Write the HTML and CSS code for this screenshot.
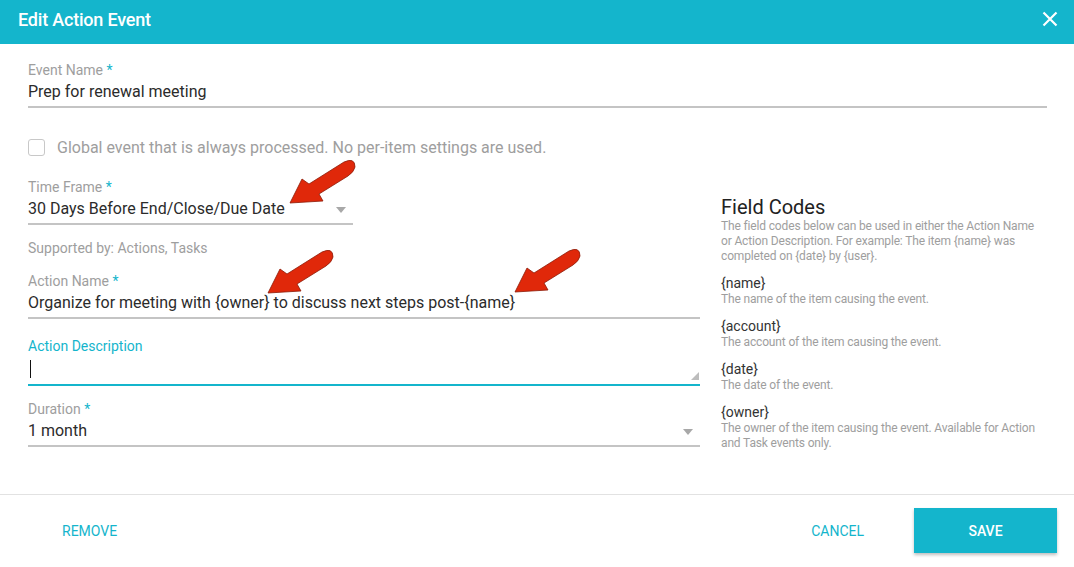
FILE: index.html
```html
<!DOCTYPE html>
<html lang="en">
<head>
    <meta charset="UTF-8">
    <title>Edit Action Event</title>
    <link rel="stylesheet" href="styles.css">
</head>
<body>
    <div class="dialog">
        <div class="title-bar">
            <span class="title">Edit Action Event</span>
            <svg class="close-icon" width="16" height="16" viewBox="0 0 16 16">
                <path d="M1.5 1.5 L14.5 14.5 M14.5 1.5 L1.5 14.5" stroke="#fff" stroke-width="2.2" fill="none"/>
            </svg>
        </div>

        <div class="content">
            <div class="field field-event">
                <div class="label">Event Name <span class="req">*</span></div>
                <div class="value">Prep for renewal meeting</div>
            </div>

            <div class="check-row">
                <span class="checkbox"></span>
                <span>Global event that is always processed. No per-item settings are used.</span>
            </div>

            <div class="columns">
                <div class="left">
                    <div class="field field-time">
                        <div class="label">Time Frame <span class="req">*</span></div>
                        <div class="value select">30 Days Before End/Close/Due Date<span class="caret"></span></div>
                    </div>
                    <div class="hint">Supported by: Actions, Tasks</div>
                    <div class="field field-name">
                        <div class="label">Action Name <span class="req">*</span></div>
                        <div class="value">Organize for meeting with {owner} to discuss next steps post-{name}</div>
                    </div>
                    <div class="field field-desc focused">
                        <div class="label">Action Description</div>
                        <div class="value textarea"><span class="cursor"></span><span class="grip"></span></div>
                    </div>
                    <div class="field field-duration">
                        <div class="label">Duration <span class="req">*</span></div>
                        <div class="value select">1 month<span class="caret"></span></div>
                    </div>
                </div>

                <div class="codes">
                    <h2>Field Codes</h2>
                    <p class="codes-intro">The field codes below can be used in either the Action Name or Action Description. For example: The item {name} was completed on {date} by {user}.</p>
                    <div class="code">
                        <div class="code-name">{name}</div>
                        <div class="code-desc">The name of the item causing the event.</div>
                    </div>
                    <div class="code">
                        <div class="code-name">{account}</div>
                        <div class="code-desc">The account of the item causing the event.</div>
                    </div>
                    <div class="code">
                        <div class="code-name">{date}</div>
                        <div class="code-desc">The date of the event.</div>
                    </div>
                    <div class="code">
                        <div class="code-name">{owner}</div>
                        <div class="code-desc">The owner of the item causing the event. Available for Action and Task events only.</div>
                    </div>
                </div>
            </div>
        </div>

        <div class="footer">
            <button class="btn-flat">REMOVE</button>
            <div class="footer-right">
                <button class="btn-flat">CANCEL</button>
                <button class="btn-save">SAVE</button>
            </div>
        </div>

        <!-- annotation arrows drawn over the form -->
        <svg class="arrows" width="1074" height="567" viewBox="0 0 1074 567">
            <defs>
                <path id="arrow" d="M0,0 L12,-24 L19,-19 L54,-41 Q65,-46 65,-36 Q64,-31 58,-27 L29,-9 L33,-2 Z"
                      fill="#e0280a" stroke="#8c1a08" stroke-width="0.8" stroke-linejoin="round"/>
            </defs>
            <use href="#arrow" x="290" y="203"/>
            <use href="#arrow" x="268" y="293"/>
            <use href="#arrow" x="515" y="292"/>
        </svg>
    </div>
</body>
</html>
```

FILE: styles.css
```css
body {
    margin: 0;
    font-family: Roboto, "Liberation Sans", Arial, sans-serif;
    background: #fff;
}

.dialog {
    position: relative;
    width: 1074px;
    height: 567px;
    overflow: hidden;
}

.title-bar {
    height: 44px;
    background-color: #14b5cc;
    color: #fff;
    display: flex;
    align-items: center;
    justify-content: space-between;
    padding: 0 16px 0 18px;
}

.title {
    font-size: 18px;
    font-weight: 500;
    letter-spacing: -0.2px;
    margin-top: -6px;
}

.close-icon {
    margin-top: -7px;
}

.content {
    padding: 18px 27px 0 28px;
}

.field .label {
    font-size: 14px;
    line-height: 17px;
    color: #9e9e9e;
}

.req {
    color: #14b5cc;
}

.field .value {
    position: relative;
    font-size: 16px;
    line-height: 20px;
    color: #2b2b2b;
    margin-top: 3px;
    padding-bottom: 4px;
    border-bottom: 2px solid #c4c4c4;
}

.field.focused .label {
    color: #14b5cc;
}

.field.focused .value {
    border-bottom-color: #14b5cc;
}

.check-row {
    display: flex;
    align-items: center;
    gap: 12px;
    margin-top: 29px;
    height: 20px;
    font-size: 16px;
    color: #9e9e9e;
}

.checkbox {
    width: 15px;
    height: 15px;
    border: 1.5px solid #c8c8c8;
    border-radius: 3px;
}

.columns {
    display: grid;
    grid-template-columns: 672px 1fr;
    gap: 21px;
    margin-top: 22px;
}

.field-time {
    width: 325px;
}

.select .caret {
    position: absolute;
    right: 7px;
    top: 8px;
    border-left: 5px solid transparent;
    border-right: 5px solid transparent;
    border-top: 6px solid #a8a8a8;
}

.hint {
    font-size: 14px;
    line-height: 17px;
    color: #9e9e9e;
    margin-top: 15px;
}

.field-name {
    margin-top: 16px;
}

.field-desc {
    margin-top: 19px;
}

.textarea {
    height: 24px;
    padding-bottom: 2px !important;
}

.cursor {
    position: absolute;
    left: 2px;
    top: 2px;
    width: 1px;
    height: 18px;
    background: #111;
}

.grip {
    position: absolute;
    right: 1px;
    bottom: 4px;
    width: 0;
    height: 0;
    border-left: 8px solid transparent;
    border-bottom: 8px solid #bdbdbd;
}

.field-duration {
    margin-top: 15px;
}

.codes {
    padding-top: 16px;
}

.codes h2 {
    margin: 0;
    font-size: 20px;
    font-weight: 400;
    line-height: 24px;
    color: #222;
}

.codes-intro {
    margin: 0;
    font-size: 12px;
    line-height: 15px;
    color: #9e9e9e;
    letter-spacing: -0.15px;
}

.code {
    margin-top: 11px;
}

.code-name {
    font-size: 14px;
    line-height: 17px;
    color: #333;
}

.code-desc {
    font-size: 12px;
    line-height: 15px;
    color: #9e9e9e;
    letter-spacing: -0.15px;
}

.footer {
    position: absolute;
    left: 0;
    right: 0;
    top: 494px;
    border-top: 1px solid #e2e2e2;
    display: flex;
    justify-content: space-between;
    align-items: flex-start;
    padding: 13px 17px 0 38px;
}

.footer-right {
    display: flex;
    align-items: center;
    gap: 26px;
}

button {
    font-family: inherit;
    font-size: 14px;
    border: none;
    cursor: pointer;
}

.btn-flat {
    background: none;
    color: #14b5cc;
    height: 45px;
    padding: 0 24px;
}

.btn-save {
    width: 143px;
    height: 45px;
    background-color: #14b5cc;
    color: #fff;
    font-weight: 500;
    box-shadow: 0 2px 3px rgba(0, 0, 0, 0.25);
}

.arrows {
    position: absolute;
    left: 0;
    top: 0;
    pointer-events: none;
}
```
